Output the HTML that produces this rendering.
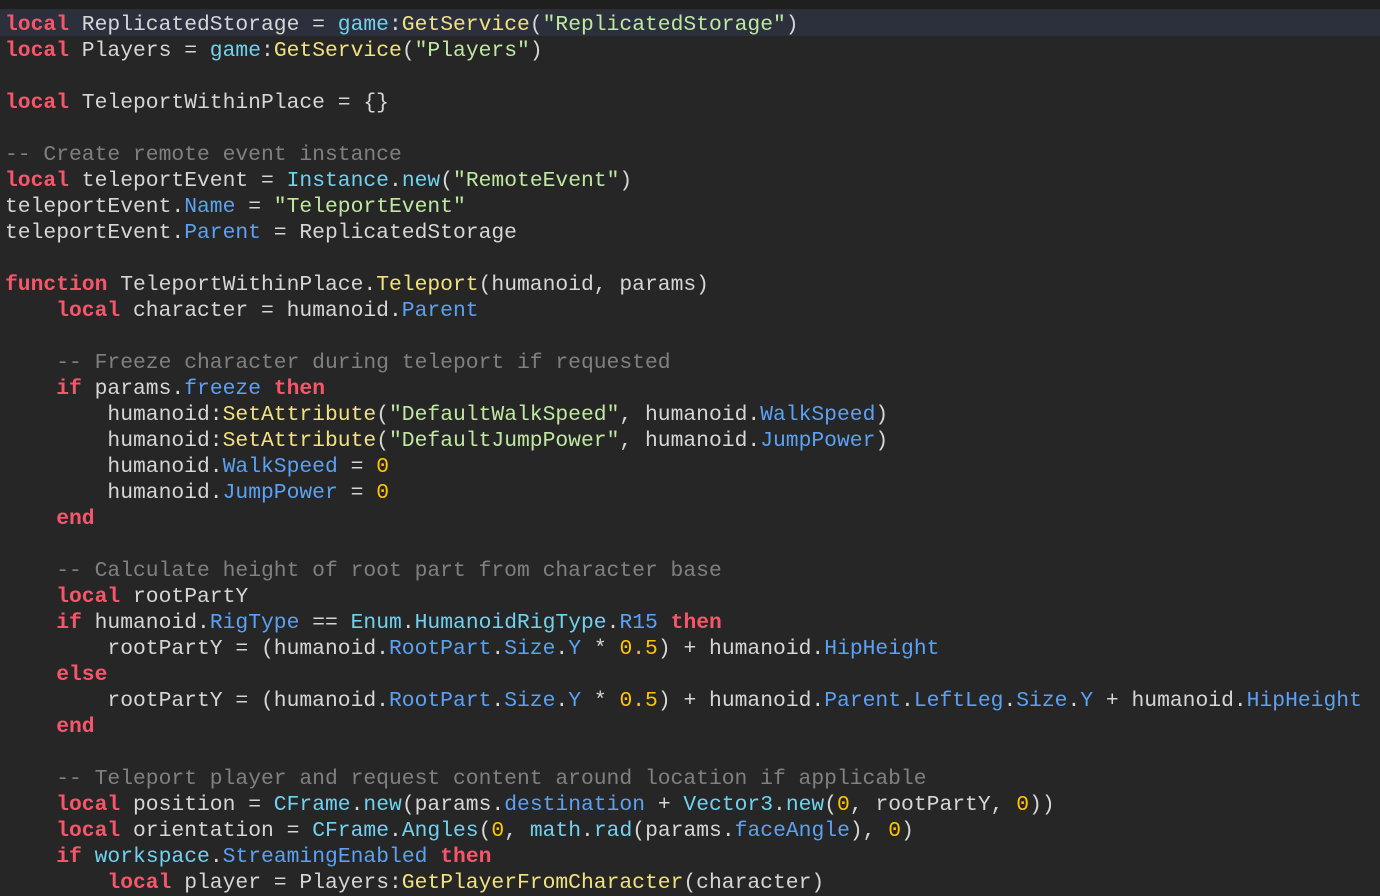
<!DOCTYPE html>
<html><head><meta charset="utf-8"><style>
body{margin:0;background:#262626;width:1380px;height:894px;overflow:hidden}
.top{position:absolute;left:0;top:0;width:1380px;height:9px;background:#1f1f1f;border-bottom:1px solid #2e2e2e}
.hl{position:absolute;left:0;top:10px;width:1380px;height:26px;background:#2c303d}
pre{position:absolute;left:5px;top:12px;margin:0;font-family:"Liberation Mono",monospace;font-size:21.33px;line-height:26px;color:#d6d6d6}
.k{color:#f7566a;font-weight:bold}.c{color:#6fd3f0}.p{color:#5ba1f5}.m{color:#f1e27f}.s{color:#bfe8a0}.n{color:#ffc600}.g{color:#808080}
</style></head><body><div class="top"></div><div class="hl"></div>
<pre><span class="k">local</span> ReplicatedStorage = <span class="c">game</span>:<span class="m">GetService</span>(<span class="s">"ReplicatedStorage"</span>)
<span class="k">local</span> Players = <span class="c">game</span>:<span class="m">GetService</span>(<span class="s">"Players"</span>)

<span class="k">local</span> TeleportWithinPlace = {}

<span class="g">-- Create remote event instance</span>
<span class="k">local</span> teleportEvent = <span class="c">Instance</span>.<span class="c">new</span>(<span class="s">"RemoteEvent"</span>)
teleportEvent.<span class="p">Name</span> = <span class="s">"TeleportEvent"</span>
teleportEvent.<span class="p">Parent</span> = ReplicatedStorage

<span class="k">function</span> TeleportWithinPlace.<span class="m">Teleport</span>(humanoid, params)
    <span class="k">local</span> character = humanoid.<span class="p">Parent</span>

    <span class="g">-- Freeze character during teleport if requested</span>
    <span class="k">if</span> params.<span class="p">freeze</span> <span class="k">then</span>
        humanoid:<span class="m">SetAttribute</span>(<span class="s">"DefaultWalkSpeed"</span>, humanoid.<span class="p">WalkSpeed</span>)
        humanoid:<span class="m">SetAttribute</span>(<span class="s">"DefaultJumpPower"</span>, humanoid.<span class="p">JumpPower</span>)
        humanoid.<span class="p">WalkSpeed</span> = <span class="n">0</span>
        humanoid.<span class="p">JumpPower</span> = <span class="n">0</span>
    <span class="k">end</span>

    <span class="g">-- Calculate height of root part from character base</span>
    <span class="k">local</span> rootPartY
    <span class="k">if</span> humanoid.<span class="p">RigType</span> == <span class="c">Enum</span>.<span class="c">HumanoidRigType</span>.<span class="p">R15</span> <span class="k">then</span>
        rootPartY = (humanoid.<span class="p">RootPart</span>.<span class="p">Size</span>.<span class="p">Y</span> * <span class="n">0.5</span>) + humanoid.<span class="p">HipHeight</span>
    <span class="k">else</span>
        rootPartY = (humanoid.<span class="p">RootPart</span>.<span class="p">Size</span>.<span class="p">Y</span> * <span class="n">0.5</span>) + humanoid.<span class="p">Parent</span>.<span class="p">LeftLeg</span>.<span class="p">Size</span>.<span class="p">Y</span> + humanoid.<span class="p">HipHeight</span>
    <span class="k">end</span>

    <span class="g">-- Teleport player and request content around location if applicable</span>
    <span class="k">local</span> position = <span class="c">CFrame</span>.<span class="c">new</span>(params.<span class="p">destination</span> + <span class="c">Vector3</span>.<span class="c">new</span>(<span class="n">0</span>, rootPartY, <span class="n">0</span>))
    <span class="k">local</span> orientation = <span class="c">CFrame</span>.<span class="c">Angles</span>(<span class="n">0</span>, <span class="c">math</span>.<span class="c">rad</span>(params.<span class="p">faceAngle</span>), <span class="n">0</span>)
    <span class="k">if</span> <span class="c">workspace</span>.<span class="p">StreamingEnabled</span> <span class="k">then</span>
        <span class="k">local</span> player = Players:<span class="m">GetPlayerFromCharacter</span>(character)
</pre></body></html>
